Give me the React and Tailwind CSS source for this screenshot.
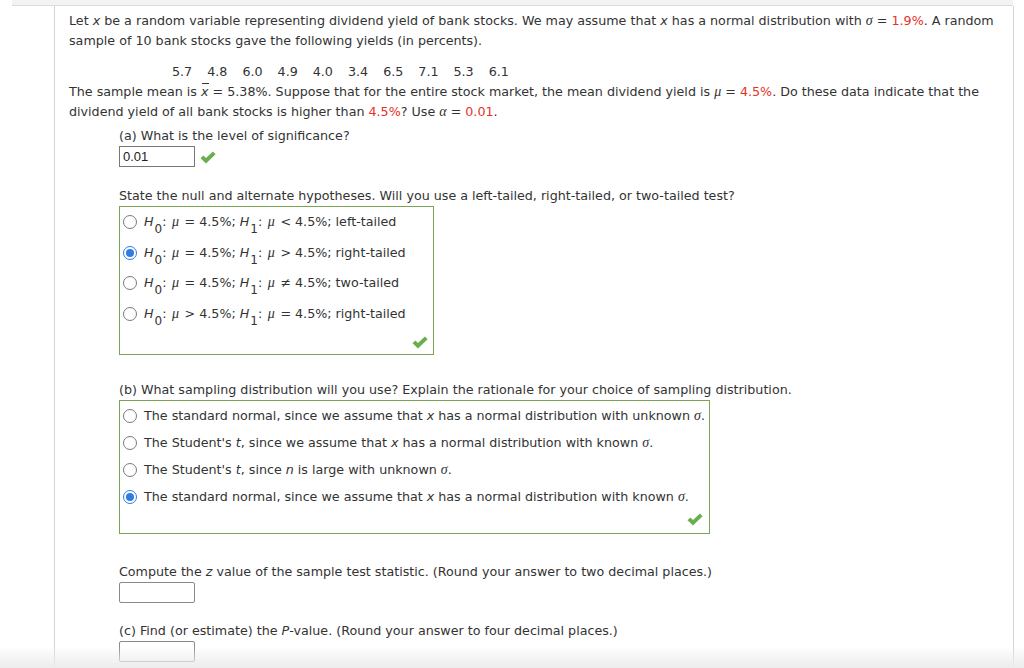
import React from "react";

const Red = ({ children }) => <span className="text-[#e8302a]">{children}</span>;
const I = ({ children }) => <span className="italic">{children}</span>;
const G = ({ children }) => <span className="italic font-['Liberation_Serif',serif] text-[14px]">{children}</span>;

const Check = ({ className = "" }) => (
  <svg viewBox="0 0 16 13" className={"w-[16px] h-[13px] " + className}>
    <path d="M0.5 7.2 L3.3 4.6 L6 7.1 L12.9 0.6 L15.6 3.2 L6 12.4 Z" fill="#6aae4f" />
  </svg>
);

const Radio = ({ checked }) =>
  checked ? (
    <span className="inline-flex w-[14px] h-[14px] rounded-full border border-[#2f7de1] bg-white items-center justify-center shrink-0">
      <span className="w-[8px] h-[8px] rounded-full bg-[#2f7de1]" />
    </span>
  ) : (
    <span className="inline-block w-[14px] h-[14px] rounded-full border border-[#7a7a7a] bg-white shrink-0" />
  );

const H = ({ n }) => (
  <span>
    <I>H</I>
    <sub className="text-[12px] align-[-4px] leading-none pl-[1px]">{n}</sub>
  </span>
);

const Mu = () => <G>μ</G>;
const MuW = () => <span className="px-[1.5px]"><G>μ</G></span>;

const hyps = [
  [false, <>= 4.5%; </>, <>&lt; 4.5%; left-tailed</>],
  [true, <>= 4.5%; </>, <>&gt; 4.5%; right-tailed</>],
  [false, <>= 4.5%; </>, <>≠ 4.5%; two-tailed</>],
  [false, <>&gt; 4.5%; </>, <>= 4.5%; right-tailed</>],
];

const nums = ["5.7", "4.8", "6.0", "4.9", "4.0", "3.4", "6.5", "7.1", "5.3", "6.1"];

export default function App() {
  return (
    <div className="w-[1024px] h-[668px] bg-white overflow-hidden relative font-['DejaVu_Sans',Verdana,sans-serif] text-[12.7px] text-[#333] leading-[20px]">
      <div className="ml-[12px] w-[1001px] h-[6px] bg-[#f3f3f3] border-b border-[#dcdcdc]" />
      <div className="ml-[54px] w-[960px] h-[662px] border-l border-r border-[#d4d4d4] pl-[14px] pr-[14px] pt-[5px]">
        <p>
          Let <I>x</I> be a random variable representing dividend yield of bank stocks. We may assume that <I>x</I> has a normal distribution with <G>σ</G> = <Red>1.9%</Red>. A random sample of 10 bank stocks gave the following yields (in percents).
        </p>
        <div className="flex gap-[15px] pl-[103px] mt-[11px]">
          {nums.map((n, i) => (
            <span key={i}>{n}</span>
          ))}
        </div>
        <p>
          The sample mean is{" "}
          <span className="relative inline-block">
            <I>x</I>
            <span className="absolute left-[1px] right-0 top-[1px] h-[1px] bg-[#333]" />
          </span>{" "}
          = 5.38%. Suppose that for the entire stock market, the mean dividend yield is <Mu /> = <Red>4.5%</Red>. Do these data indicate that the dividend yield of all bank stocks is higher than <Red>4.5%</Red>? Use <G>α</G> = <Red>0.01</Red>.
        </p>

        <div className="ml-[50px]">
          <p className="mt-[4px]">(a) What is the level of significance?</p>
          <div className="flex items-center gap-[5px]">
            <div className="w-[76px] h-[21px] border border-[#777] font-['Liberation_Sans',Arial,sans-serif] text-[13px] leading-[19px] pl-[3px] text-[#222]">0.01</div>
            <Check className="mt-[2px]" />
          </div>

          <p className="mt-[19px]">State the null and alternate hypotheses. Will you use a left-tailed, right-tailed, or two-tailed test?</p>
          <div className="w-[315px] h-[149px] border border-[#7ba354] relative">
            {hyps.map(([c, a, b], i) => (
              <div key={i} className="flex items-center h-[30.5px] pl-[3px] gap-[7px] whitespace-nowrap">
                <Radio checked={c} />
                <span>
                  <H n="0" />: <MuW /> {a}
                  <H n="1" />: <MuW /> {b}
                </span>
              </div>
            ))}
            <Check className="absolute right-[5px] bottom-[5px]" />
          </div>

          <p className="mt-[25px]">(b) What sampling distribution will you use? Explain the rationale for your choice of sampling distribution.</p>
          <div className="w-[591px] h-[134px] border border-[#7ba354] relative pt-[1px] whitespace-nowrap">
            <div className="flex items-center h-[27px] pl-[3px] gap-[7px]">
              <Radio />
              <span>The standard normal, since we assume that <I>x</I> has a normal distribution with unknown <G>σ</G>.</span>
            </div>
            <div className="flex items-center h-[27px] pl-[3px] gap-[7px]">
              <Radio />
              <span>The Student's <I>t</I>, since we assume that <I>x</I> has a normal distribution with known <G>σ</G>.</span>
            </div>
            <div className="flex items-center h-[27px] pl-[3px] gap-[7px]">
              <Radio />
              <span>The Student's <I>t</I>, since <I>n</I> is large with unknown <G>σ</G>.</span>
            </div>
            <div className="flex items-center h-[27px] pl-[3px] gap-[7px]">
              <Radio checked />
              <span>The standard normal, since we assume that <I>x</I> has a normal distribution with known <G>σ</G>.</span>
            </div>
            <Check className="absolute right-[6px] bottom-[7px]" />
          </div>

          <p className="mt-[28px]">Compute the <I>z</I> value of the sample test statistic. (Round your answer to two decimal places.)</p>
          <div className="w-[76px] h-[21px] border border-[#8a8a8a] rounded-[2px]" />

          <p className="mt-[18px]">(c) Find (or estimate) the <I>P</I>-value. (Round your answer to four decimal places.)</p>
          <div className="w-[76px] h-[21px] border border-[#8a8a8a] rounded-[2px]" />
        </div>
      </div>
      <div className="absolute left-0 right-0 bottom-0 h-[22px] bg-gradient-to-b from-white/0 to-[#ececec]" />
    </div>
  );
}
